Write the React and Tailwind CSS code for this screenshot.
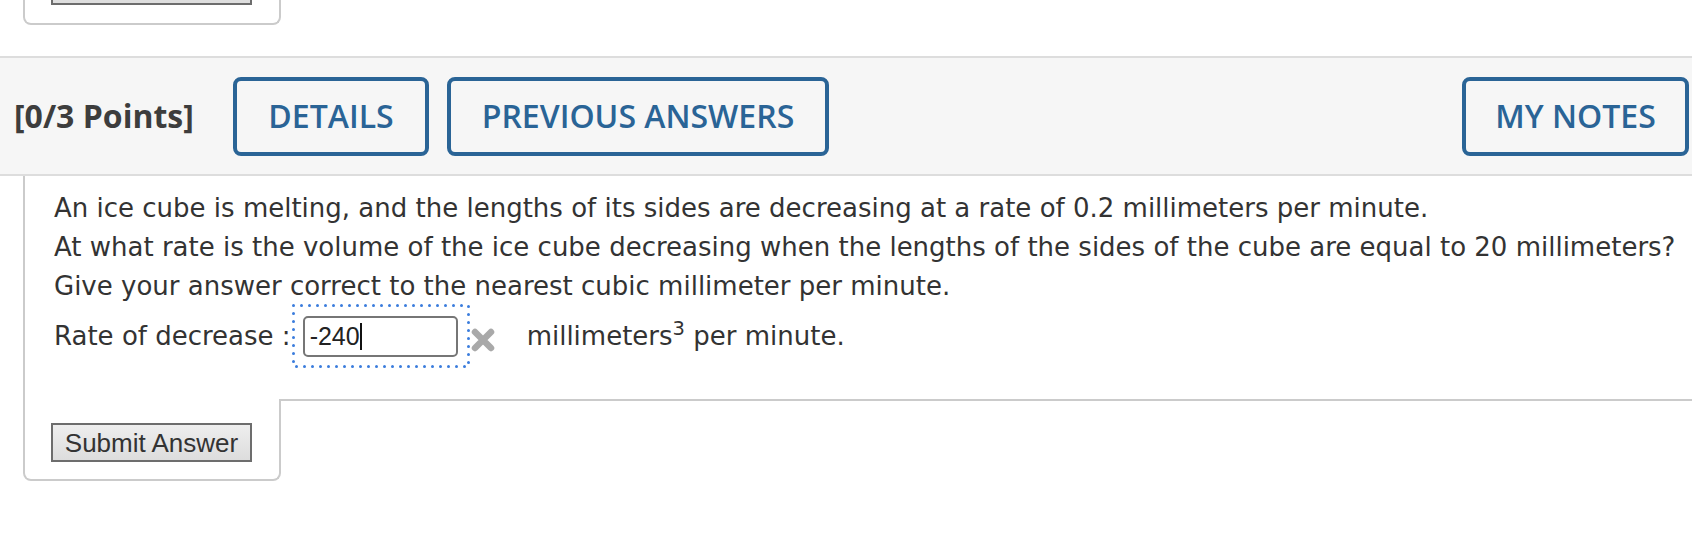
import React from 'react';

function HeaderButton({ label, width }) {
    return (
        <button
            type="button"
            className={`h-[79px] ${width} shrink-0 rounded-[8px] border-[4px] border-[#2a6496] bg-transparent text-[32px] font-semibold text-[#2a6496] flex items-center justify-center`}
        >
            {label}
        </button>
    );
}

function CrossIcon() {
    return (
        <svg width="26" height="26" viewBox="0 0 26 26" className="mt-[8px] shrink-0 blur-[0.5px]">
            <path d="M5 5 L21 21 M21 5 L5 21" stroke="#a9a9a9" strokeWidth="6.5" strokeLinecap="round" fill="none" />
        </svg>
    );
}

export default function App() {
    return (
        <div className="w-[1692px] h-[546px] bg-white overflow-hidden">
            {/* tail of the previous question box */}
            <div className="ml-[23px] w-[258px] h-[25px] border-x-2 border-b-2 border-[#cbcbcb] rounded-b-lg">
                <div className="ml-[26px] w-[201px] h-[5px] border-x-2 border-b-2 border-[#6d6d6d] bg-[#dedede]" />
            </div>

            {/* header band */}
            <div className="mt-[31px] h-[120px] border-y-2 border-[#dddddd] bg-[#f6f6f6] flex items-center pl-[14px] pr-[3px] font-['Open_Sans',sans-serif]">
                <div className="w-[219px] shrink-0 text-[32px] font-bold text-[#3d3d3d]">[0/3 Points]</div>
                <HeaderButton label="DETAILS" width="w-[196px]" />
                <div className="ml-[18px]">
                    <HeaderButton label="PREVIOUS ANSWERS" width="w-[382px]" />
                </div>
                <div className="ml-auto">
                    <HeaderButton label="MY NOTES" width="w-[227px]" />
                </div>
            </div>

            {/* question */}
            <div className="ml-[23px]">
                <div className="h-[223px] border-l-2 border-[#cbcbcb] pl-[29px] pt-[13px] font-['DejaVu_Sans',Verdana,sans-serif] text-[26px] leading-[39px] text-[#333333]">
                    <div>An ice cube is melting, and the lengths of its sides are decreasing at a rate of 0.2 millimeters per minute.</div>
                    <div>At what rate is the volume of the ice cube decreasing when the lengths of the sides of the cube are equal to 20 millimeters?</div>
                    <div>Give your answer correct to the nearest cubic millimeter per minute.</div>
                    <div className="-mt-[2px] h-[64px] flex items-center whitespace-nowrap">
                        <span>Rate of decrease :</span>
                        <div className="relative ml-[1px] w-[178px] h-[64px] shrink-0 flex items-center pl-[11px]">
                            <svg className="absolute inset-0 pointer-events-none" width="178" height="64" viewBox="0 0 178 64">
                                <rect x="1.5" y="1.5" width="175" height="61" fill="none" stroke="#3b7ddd" strokeWidth="3" strokeDasharray="0 8" strokeLinecap="round" />
                            </svg>
                            <div className="mt-[1px] w-[155px] h-[41px] rounded-[5px] border-2 border-[#767676] bg-white flex items-center pl-[5px] font-['Liberation_Sans',Arial,sans-serif] text-[25px] leading-none text-[#222222]">
                                <span>-240</span>
                                <span className="inline-block w-[2px] h-[27px] bg-[#111111]" />
                            </div>
                        </div>
                        <CrossIcon />
                        <span className="ml-[31px]">
                            millimeters<sup>3</sup> per minute.
                        </span>
                    </div>
                </div>

                {/* submit row */}
                <div className="flex">
                    <div className="w-[258px] h-[82px] shrink-0 border-x-2 border-b-2 border-[#cbcbcb] rounded-b-lg">
                        <button
                            type="button"
                            className="mt-[24px] ml-[26px] w-[201px] h-[39px] border-2 border-[#6d6d6d] bg-gradient-to-b from-[#eeeeee] to-[#dddddd] font-['Liberation_Sans',Arial,sans-serif] text-[26px] leading-none text-[#333333] flex items-center justify-center"
                        >
                            Submit Answer
                        </button>
                    </div>
                    <div className="flex-1 -ml-[2px] border-t-2 border-[#cbcbcb]" />
                </div>
            </div>
        </div>
    );
}
